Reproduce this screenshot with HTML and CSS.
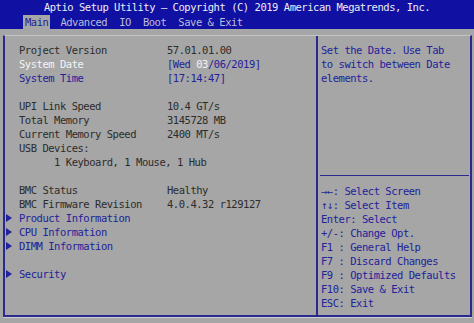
FILE: index.html
```html
<!DOCTYPE html>
<html>
<head>
<meta charset="utf-8">
<link rel="stylesheet" href="styles.css">
</head>
<body>
<div class="header">
  <div class="title">Aptio Setup Utility – Copyright (C) 2019 American Megatrends, Inc.</div>
  <div class="tabs">
    <span class="tab active">Main</span>
    <span class="tab">Advanced</span>
    <span class="tab">IO</span>
    <span class="tab">Boot</span>
    <span class="tab">Save &amp; Exit</span>
  </div>
</div>
<div class="frame">
  <div class="left">
    <div class="row"><span class="mark"></span><span class="label">Project Version</span><span class="value">57.01.01.00</span></div>
    <div class="row"><span class="mark"></span><span class="label sel">System Date</span><span class="value link">[Wed <span class="sel">03</span>/06/2019]</span></div>
    <div class="row"><span class="mark"></span><span class="label link">System Time</span><span class="value link">[17:14:47]</span></div>
    <div class="row blank"></div>
    <div class="row"><span class="mark"></span><span class="label">UPI Link Speed</span><span class="value">10.4 GT/s</span></div>
    <div class="row"><span class="mark"></span><span class="label">Total Memory</span><span class="value">3145728 MB</span></div>
    <div class="row"><span class="mark"></span><span class="label">Current Memory Speed</span><span class="value">2400 MT/s</span></div>
    <div class="row"><span class="mark"></span><span class="label">USB Devices:</span></div>
    <div class="row"><span class="mark"></span><span class="label wide">      1 Keyboard, 1 Mouse, 1 Hub</span></div>
    <div class="row blank"></div>
    <div class="row"><span class="mark"></span><span class="label">BMC Status</span><span class="value">Healthy</span></div>
    <div class="row"><span class="mark"></span><span class="label">BMC Firmware Revision</span><span class="value">4.0.4.32 r129127</span></div>
    <div class="row"><span class="mark"><svg width="6" height="8" viewBox="0 0 6 8"><polygon points="0,0 6,4 0,8" fill="#22229a"/></svg></span><span class="label link wide">Product Information</span></div>
    <div class="row"><span class="mark"><svg width="6" height="8" viewBox="0 0 6 8"><polygon points="0,0 6,4 0,8" fill="#22229a"/></svg></span><span class="label link wide">CPU Information</span></div>
    <div class="row"><span class="mark"><svg width="6" height="8" viewBox="0 0 6 8"><polygon points="0,0 6,4 0,8" fill="#22229a"/></svg></span><span class="label link wide">DIMM Information</span></div>
    <div class="row blank"></div>
    <div class="row"><span class="mark"><svg width="6" height="8" viewBox="0 0 6 8"><polygon points="0,0 6,4 0,8" fill="#22229a"/></svg></span><span class="label link wide">Security</span></div>
  </div>
  <div class="right">
    <div class="help">Set the Date. Use Tab
to switch between Date
elements.</div>
    <div class="divider"></div>
    <div class="keys">→←: Select Screen
↑↓: Select Item
Enter: Select
+/-: Change Opt.
F1 : General Help
F7 : Discard Changes
F9 : Optimized Defaults
F10: Save &amp; Exit
ESC: Exit</div>
  </div>
</div>
</body>
</html>
```

FILE: styles.css
```css
* { box-sizing: border-box; }
html, body {
  margin: 0;
  padding: 0;
  background: #a6a6a6;
  width: 474px;
  height: 323px;
  overflow: hidden;
}
body {
  font-family: "DejaVu Sans Mono", "Liberation Mono", monospace;
  font-size: 10.5px;
  letter-spacing: -0.47px;
  color: #2c2c2c;
}
.header {
  background: #1010a2;
  height: 29px;
}
.title {
  height: 15px;
  line-height: 15px;
  text-align: center;
  color: #ececf4;
}
.tabs {
  display: flex;
  gap: 8px;
  padding-left: 23px;
  height: 14px;
  line-height: 14px;
}
.tab {
  padding: 0 2px;
  color: #bcbcd6;
  white-space: pre;
}
.tab.active {
  background: #a6a6a6;
  color: #22229a;
}
.frame {
  margin: 6px 0 0 3px;
  width: 469px;
  height: 282px;
  border-top: 1px solid #c4c4c8;
  border-left: 2px solid #2a2a8e;
  border-right: 2px solid #2a2a8e;
  border-bottom: 2px solid #2a2a8e;
  box-shadow: 0 1px 0 #cfcfcf;
  display: flex;
}
.left {
  width: 313px;
  border-right: 2px solid #2a2a8e;
  padding-top: 7px;
}
.row {
  display: grid;
  grid-template-columns: 14px 148px auto;
  height: 14px;
  line-height: 14px;
  white-space: pre;
}
.mark {
  display: flex;
  align-items: center;
  padding-left: 1px;
}
.wide { grid-column: 2 / span 2; }
.link { color: #22229a; }
.sel { color: #f4f4f4; }
.right {
  flex: 1;
  display: flex;
  flex-direction: column;
  padding-top: 7px;
}
.help, .keys {
  white-space: pre;
  line-height: 14px;
  color: #22229a;
  padding-left: 3px;
}
.help { flex: 1; }
.divider {
  height: 1px;
  background: #2a2a8e;
  margin: 0 1px 0 2px;
}
.keys {
  padding-top: 8px;
  padding-bottom: 5px;
}
```
